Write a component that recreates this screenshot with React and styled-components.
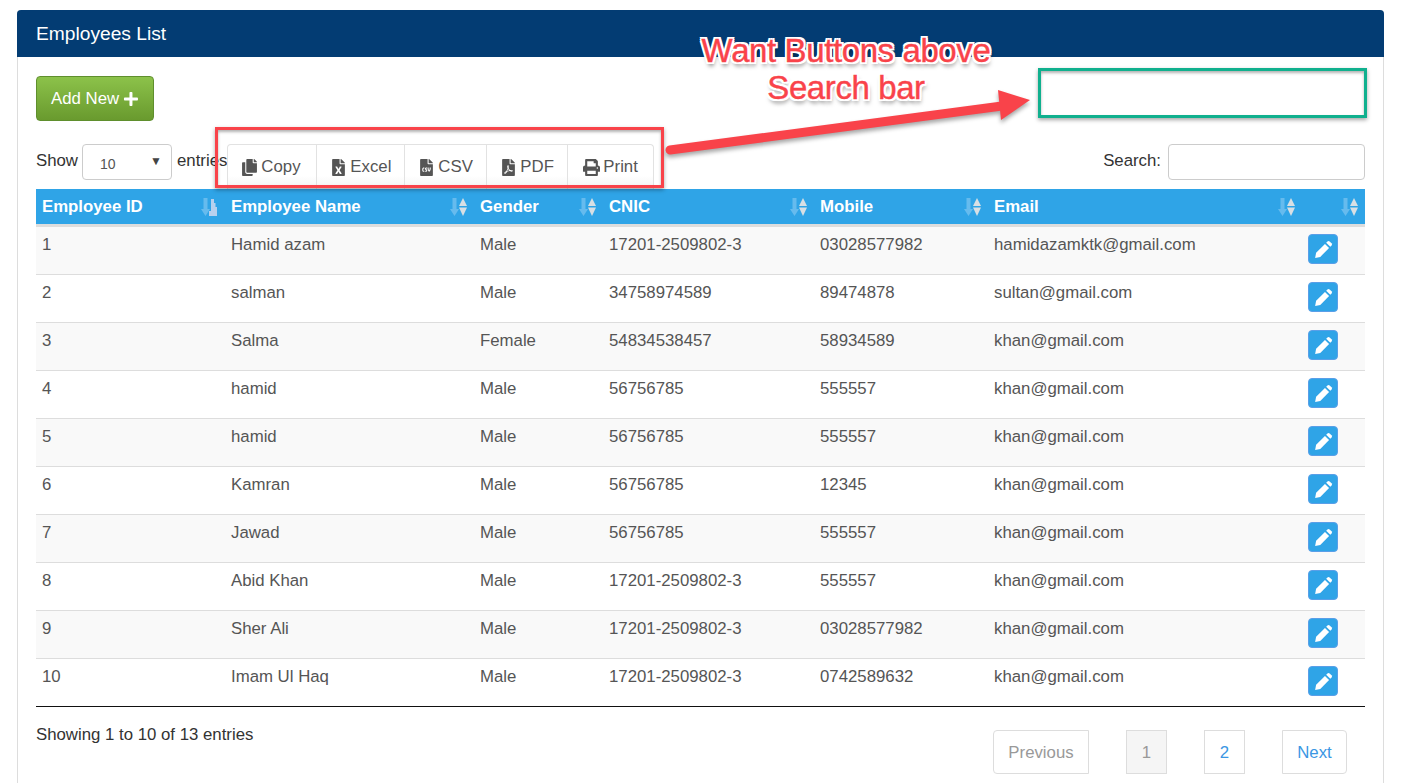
import React from 'react';
import styled, { createGlobalStyle } from 'styled-components';
import { FaCopy, FaFileExcel, FaFileCsv, FaFilePdf, FaPrint, FaPlus } from 'react-icons/fa';

const GlobalStyle = createGlobalStyle`
  html, body {
    margin: 0;
    height: 783px;
    overflow: hidden;
    background: #fff;
  }
  body {
    font-family: "Liberation Sans", Arial, sans-serif;
    font-size: 16.8px;
    color: #555;
  }
  * { box-sizing: border-box; }
`;

const Page = styled.div`
  position: relative;
  height: 783px;
  padding: 10px 19px 0 17px;
`;

const Panel = styled.section`
  height: 800px;
  border: 1px solid #ddd;
  border-top: none;
  border-radius: 4px 4px 0 0;
`;

const PanelHeader = styled.header`
  height: 47px;
  margin: 0 -1px;
  padding: 0 19px;
  display: flex;
  align-items: center;
  background: #033c73;
  color: #fff;
  font-size: 19.2px;
  border-radius: 4px 4px 0 0;
`;

const PanelBody = styled.div`
  padding: 19px 18px 0;
`;

const AddButton = styled.button`
  display: flex;
  align-items: center;
  gap: 4px;
  height: 45px;
  width: 118px;
  padding: 0 14px;
  border: 1px solid #5f8f2d;
  border-radius: 4px;
  background: linear-gradient(#8cc24a, #699a2e);
  color: #fff;
  font: 16.8px "Liberation Sans", Arial, sans-serif;
  white-space: nowrap;
`;

const Controls = styled.div`
  display: flex;
  align-items: flex-start;
  height: 45px;
  margin-top: 23px;
  color: #333;
`;

const Label = styled.label`
  display: flex;
  align-items: center;
  gap: 4px;
  height: 34px;
`;

const SelectBox = styled.div`
  position: relative;
  width: 90px;
  height: 36px;
  margin: 2px 1px 0 0;
  padding: 3px 0 0 17px;
  display: flex;
  align-items: center;
  border: 1px solid #ccc;
  border-radius: 4px;
  font-size: 14px;
  color: #555;
`;

const Caret = styled.span`
  position: absolute;
  right: 9px;
  top: 9px;
  font-size: 12px;
  color: #444;
`;

const ButtonGroup = styled.div`
  display: flex;
  height: 45px;
`;

const ExportButton = styled.button`
  display: flex;
  align-items: center;
  gap: 3px;
  width: ${(p) => p.$w}px;
  height: 45px;
  padding: 0 0 0 ${(p) => p.$pad}px;
  margin-left: -1px;
  border: 1px solid #e2e2e2;
  border-bottom: none;
  background: linear-gradient(#fff 70%, #f3f3f3);
  color: #555;
  font: 16.8px "Liberation Sans", Arial, sans-serif;

  &:first-child {
    margin-left: 0;
    border-top-left-radius: 4px;
  }
  &:last-child {
    border-top-right-radius: 4px;
  }
`;

const SearchLabel = styled(Label)`
  margin-left: auto;
  gap: 7px;
`;

const SearchInput = styled.input`
  width: 197px;
  height: 36px;
  margin-top: 2px;
  border: 1px solid #ccc;
  border-radius: 4px;
  background: #fff;
`;

const Table = styled.table`
  width: 100%;
  table-layout: fixed;
  border-collapse: separate;
  border-spacing: 0;
`;

const HeadCell = styled.th`
  position: relative;
  height: 38px;
  padding: 0 6px;
  background: #2fa4e7;
  background-clip: padding-box;
  border-bottom: 3px solid #ddd;
  color: #fff;
  font-size: 16.8px;
  font-weight: bold;
  text-align: left;
`;

const SortMark = styled.svg`
  position: absolute;
  right: 7px;
  top: 9px;
`;

const Row = styled.tr`
  background: ${(p) => (p.$odd ? '#f9f9f9' : '#fff')};
`;

const Cell = styled.td`
  height: 48px;
  padding: 8px 6px 0;
  vertical-align: top;
  line-height: 19px;
  border-bottom: 1px solid ${(p) => (p.$last ? '#111' : '#ddd')};
`;

const EditButton = styled.button`
  display: flex;
  align-items: center;
  justify-content: center;
  width: 30px;
  height: 30px;
  margin-top: -1px;
  padding: 0;
  border: 1px solid #5a9fe8;
  border-radius: 4px;
  background: #2fa4e7;
`;

const Footer = styled.div`
  display: flex;
  justify-content: space-between;
  align-items: flex-start;
  margin-top: 18px;
  padding-right: 18px;
  color: #333;
`;

const Pager = styled.div`
  display: flex;
  gap: 37px;
  margin-top: 5px;
`;

const PageLink = styled.a`
  display: flex;
  align-items: center;
  justify-content: center;
  width: ${(p) => p.$w}px;
  height: 44px;
  padding-top: 1px;
  border: 1px solid #ddd;
  border-radius: ${(p) => p.$radius || '0'};
  background: ${(p) => (p.$active ? '#f5f5f5' : '#fff')};
  color: ${(p) => (p.$muted ? '#999' : '#3b97e3')};
`;

const CalloutBox = styled.div`
  position: absolute;
  left: ${(p) => p.$x}px;
  top: ${(p) => p.$y}px;
  width: ${(p) => p.$w}px;
  height: ${(p) => p.$h}px;
  border: 3px solid ${(p) => p.$color};
  box-shadow: 0 2px 4px rgba(0, 0, 0, 0.35), inset 0 2px 3px rgba(0, 0, 0, 0.3);
`;

const CalloutText = styled.div`
  position: absolute;
  left: 676px;
  top: 32px;
  width: 340px;
  text-align: center;
  font-size: 33px;
  line-height: 37px;
  letter-spacing: -0.4px;
  color: #f9434a;
  -webkit-text-stroke: 0.4px #f9434a;
  text-shadow:
    2px 0 0 #fff, -2px 0 0 #fff, 0 2px 0 #fff, 0 -2px 0 #fff,
    2px 2px 0 #fff, -2px 2px 0 #fff, 2px -2px 0 #fff, -2px -2px 0 #fff,
    1px 4px 4px rgba(0, 0, 0, 0.5);
`;

const ArrowLayer = styled.svg`
  position: absolute;
  left: 0;
  top: 0;
  pointer-events: none;
  filter: drop-shadow(0 3px 2px rgba(0, 0, 0, 0.35));
`;

const employees = [
  ['1', 'Hamid azam', 'Male', '17201-2509802-3', '03028577982', 'hamidazamktk@gmail.com'],
  ['2', 'salman', 'Male', '34758974589', '89474878', 'sultan@gmail.com'],
  ['3', 'Salma', 'Female', '54834538457', '58934589', 'khan@gmail.com'],
  ['4', 'hamid', 'Male', '56756785', '555557', 'khan@gmail.com'],
  ['5', 'hamid', 'Male', '56756785', '555557', 'khan@gmail.com'],
  ['6', 'Kamran', 'Male', '56756785', '12345', 'khan@gmail.com'],
  ['7', 'Jawad', 'Male', '56756785', '555557', 'khan@gmail.com'],
  ['8', 'Abid Khan', 'Male', '17201-2509802-3', '555557', 'khan@gmail.com'],
  ['9', 'Sher Ali', 'Male', '17201-2509802-3', '03028577982', 'khan@gmail.com'],
  ['10', 'Imam Ul Haq', 'Male', '17201-2509802-3', '0742589632', 'khan@gmail.com'],
];

const columns = [
  ['Employee ID', 189],
  ['Employee Name', 249],
  ['Gender', 129],
  ['CNIC', 211],
  ['Mobile', 174],
  ['Email', 314],
  ['', 63],
];

const exportsList = [
  ['Copy', FaCopy, 90, 13],
  ['Excel', FaFileExcel, 89, 13],
  ['CSV', FaFileCsv, 83, 13],
  ['PDF', FaFilePdf, 82, 13],
  ['Print', FaPrint, 87, 15],
];

const SortIcon = ({ sorted }) => (
  <SortMark width="17" height="18" viewBox="0 0 17 18">
    <path d="M2.500 0h4v11H9l-4.500 7L0 11h2.500z" fill="#66bbee" />
    {sorted ? (
      <path d="M10 1h3v4h1.500v4H16v9H8v-5h2z" fill="#b7d0ee" />
    ) : (
      <>
        <path d="M13 0l4 8H9z" fill="#d8dfe4" />
        <path d="M9 9.500h8L13 18z" fill="#d8dfe4" />
      </>
    )}
  </SortMark>
);

const PencilIcon = () => (
  <svg width="19" height="19" viewBox="0 0 17 17">
    <path d="M1 16l.9-4.600L9.800 3.500l3.700 3.700-7.900 7.900z" fill="#fff" />
    <path d="M10.900 2.400l1.100-1.100q1-.9 2 0l1.700 1.700q.9 1 0 2l-1.100 1.100z" fill="#fff" />
  </svg>
);

const App = () => (
  <Page>
    <GlobalStyle />
    <Panel>
      <PanelHeader>Employees List</PanelHeader>
      <PanelBody>
        <AddButton>
          Add New <FaPlus size={16} />
        </AddButton>
        <Controls>
          <Label>
            Show
            <SelectBox>
              10
              <Caret>▼</Caret>
            </SelectBox>
            entries
          </Label>
          <ButtonGroup>
            {exportsList.map(([name, Icon, w, pad]) => (
              <ExportButton key={name} $w={w} $pad={pad}>
                <Icon size={17} color="#555" />
                {name}
              </ExportButton>
            ))}
          </ButtonGroup>
          <SearchLabel>
            Search:
            <SearchInput />
          </SearchLabel>
        </Controls>
        <Table>
          <colgroup>
            {columns.map(([name, w]) => (
              <col key={name} width={w} />
            ))}
          </colgroup>
          <thead>
            <tr>
              {columns.map(([name], i) => (
                <HeadCell key={name}>
                  {name}
                  <SortIcon sorted={i === 0} />
                </HeadCell>
              ))}
            </tr>
          </thead>
          <tbody>
            {employees.map((row, i) => (
              <Row key={row[0]} $odd={i % 2 === 0}>
                {row.map((value, j) => (
                  <Cell key={j} $last={i === 9}>{value}</Cell>
                ))}
                <Cell $last={i === 9}>
                  <EditButton>
                    <PencilIcon />
                  </EditButton>
                </Cell>
              </Row>
            ))}
          </tbody>
        </Table>
        <Footer>
          <div>Showing 1 to 10 of 13 entries</div>
          <Pager>
            <PageLink $w={96} $muted $radius="4px 0 0 4px">Previous</PageLink>
            <PageLink $w={41} $muted $active>1</PageLink>
            <PageLink $w={41}>2</PageLink>
            <PageLink $w={65} $radius="0 4px 4px 0">Next</PageLink>
          </Pager>
        </Footer>
      </PanelBody>
    </Panel>

    <CalloutBox $x={215} $y={127} $w={449} $h={61} $color="#f9434a" />
    <CalloutBox $x={1038} $y={68} $w={329} $h={50} $color="#10b08e" />
    <ArrowLayer width="1403" height="783">
      <path d="M670 150L1002 106" stroke="#f9434a" strokeWidth="9" strokeLinecap="round" />
      <path d="M998 90L1030 100L1001 120z" fill="#f9434a" />
    </ArrowLayer>
    <CalloutText>
      Want Buttons above
      <br />
      Search bar
    </CalloutText>
  </Page>
);

export default App;
